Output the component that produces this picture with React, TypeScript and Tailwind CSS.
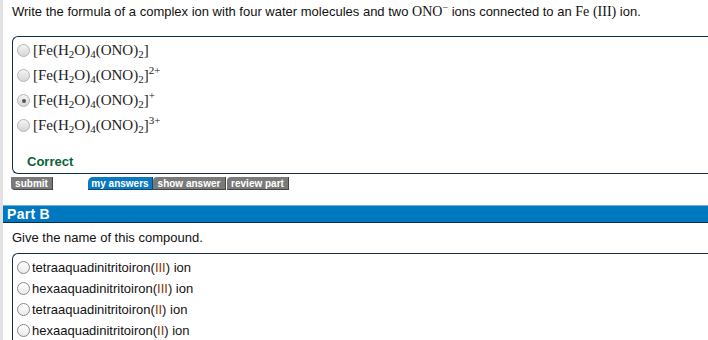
import React from 'react';

const serif = { fontFamily: '"Liberation Serif", "DejaVu Serif", serif' };

const Sub: React.FC<{ children: React.ReactNode }> = ({ children }) => (
  <span className="text-[11px] relative top-[3px]">{children}</span>
);

const Formula: React.FC<{ charge?: string }> = ({ charge }) => (
  <span className="text-[15px] leading-[18px] text-[#222]" style={serif}>
    [Fe(H<Sub>2</Sub>O)<Sub>4</Sub>(ONO)<Sub>2</Sub>]
    {charge && <span className="text-[11px] relative -top-[6px]">{charge}</span>}
  </span>
);

const GrayRadio: React.FC<{ checked?: boolean }> = ({ checked }) => (
  <span className="w-[13px] h-[13px] rounded-full border border-[#b4b4b4] bg-gradient-to-b from-[#f4f4f4] to-[#d6d6d6] flex items-center justify-center flex-shrink-0">
    {checked && <span className="w-[4px] h-[4px] rounded-full bg-[#555]" />}
  </span>
);

const WhiteRadio = () => (
  <span className="w-[13px] h-[13px] rounded-full border border-[#8a8a8a] bg-gradient-to-b from-white to-[#eaeaea] flex-shrink-0" />
);

const partA = ['', '2+', '+', '3+'];

const partB: [string, string][] = [
  ['tetraaquadinitritoiron', 'III'],
  ['hexaaquadinitritoiron', 'III'],
  ['tetraaquadinitritoiron', 'II'],
  ['hexaaquadinitritoiron', 'II'],
];

export default function App() {
  return (
    <div
      className="w-[708px] h-[340px] overflow-hidden bg-white border-l-[3px] border-[#e2e2e2] text-[#111]"
      style={{ fontFamily: '"Liberation Sans", Arial, sans-serif' }}
    >
      {/* Part A question */}
      <p className="pl-[9px] pt-[4px] text-[13px] leading-[15px]">
        Write the formula of a complex ion with four water molecules and two{' '}
        <span className="text-[14px]" style={serif}>
          ONO<span className="text-[10px] relative -top-[5px]">−</span>
        </span>{' '}
        ions connected to an <span className="text-[14px]" style={serif}>Fe</span>{' '}
        <span className="text-[14px]" style={serif}>(III)</span> ion.
      </p>

      {/* Part A answer box */}
      <div className="ml-[9px] mt-[16px] border-l border-t border-b border-[#0f2d4c] rounded-l-[6px] pt-[1px] pb-[4px]">
        {partA.map((c, i) => (
          <div key={i} className="h-[25px] flex items-center pl-[4px] gap-[3px]">
            <GrayRadio checked={i === 2} />
            <Formula charge={c || undefined} />
          </div>
        ))}
        <div className="mt-[17px] pl-[14px] text-[13px] leading-[14px] font-bold text-[#0a6236]">Correct</div>
      </div>

      {/* Buttons */}
      <div className="flex items-start ml-[8px] mt-[3px] text-[10px] leading-[13px] font-bold text-white">
        <span className="w-[42px] h-[13px] text-center bg-[#7a7a7a] rounded-bl-[4px] border-b border-r border-[#444]">submit</span>
        <span className="ml-[35px] w-[65px] h-[13px] text-center bg-[#0b78c2] rounded-tl-[5px] border-b border-r border-[#064b7a]">my answers</span>
        <span className="w-[73px] h-[13px] text-center bg-[#7a7a7a] rounded-tl-[4px] border-b border-r border-[#444]">show answer</span>
        <span className="ml-[1px] w-[62px] h-[13px] text-center bg-[#7a7a7a] rounded-tl-[4px] border-b border-r border-[#444]">review part</span>
      </div>

      {/* Part B header */}
      <div className="-ml-[3px] mt-[15px] h-[18px] border-t border-[#6db3e3] border-b border-b-[#0b2c4a] bg-[#0078c0] pl-[7px] text-[14px] leading-[16px] font-bold text-white tracking-[0.3px]">
        Part B
      </div>

      <p className="pl-[9px] mt-[7px] text-[13px] leading-[15px]">Give the name of this compound.</p>

      {/* Part B answer box */}
      <div className="ml-[9px] mt-[8px] border-l border-t border-[#0f2d4c] rounded-tl-[6px] pt-[3px]">
        {partB.map(([name, ox], i) => (
          <div key={i} className="h-[21px] flex items-center pl-[4px] gap-[2px] text-[13px]">
            <WhiteRadio />
            <span>
              {name}(<span className="text-[#8b3300]">{ox}</span>) ion
            </span>
          </div>
        ))}
      </div>
    </div>
  );
}
